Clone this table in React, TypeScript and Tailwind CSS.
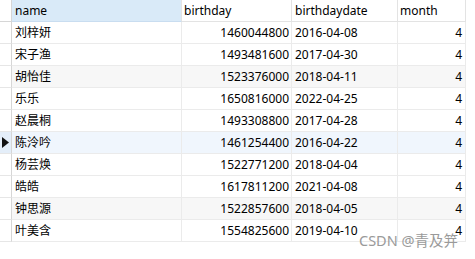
import React from "react";

const rows = [
  ["刘梓妍", "1460044800", "2016-04-08", "4"],
  ["宋子渔", "1493481600", "2017-04-30", "4"],
  ["胡怡佳", "1523376000", "2018-04-11", "4"],
  ["乐乐", "1650816000", "2022-04-25", "4"],
  ["赵晨桐", "1493308800", "2017-04-28", "4"],
  ["陈泠吟", "1461254400", "2016-04-22", "4"],
  ["杨芸焕", "1522771200", "2018-04-04", "4"],
  ["皓皓", "1617811200", "2021-04-08", "4"],
  ["钟思源", "1522857600", "2018-04-05", "4"],
  ["叶美含", "1554825600", "2019-04-10", "4"],
];

export default function App() {
  return (
    <div
      className="relative w-[475px] h-[259px] bg-white overflow-hidden text-[12px] text-black"
      style={{ fontFamily: '"Noto Sans", "Noto Sans CJK SC", sans-serif' }}
    >
      <div className="grid grid-cols-[12px_170px_110px_106px_68px] auto-rows-[22px]">
        <div className="border-r border-b border-[#d6d6d6] bg-white" />
        <div className="border-r border-b border-r-[#e3e3e3] border-b-[#c9ddf0] bg-[#d9eaf8] pl-[3px] flex items-center leading-none">name</div>
        <div className="border-r border-b border-[#e3e3e3] pl-[2px] flex items-center leading-none">birthday</div>
        <div className="border-r border-b border-[#e3e3e3] pl-[3px] flex items-center leading-none">birthdaydate</div>
        <div className="border-r border-b border-[#e3e3e3] pl-[2px] flex items-center leading-none">month</div>
        {rows.map((r, i) => {
          const selected = i === 5;
          const bg = selected ? "bg-[#f0f6fd]" : i % 3 === 2 ? "bg-[#f7f7f7]" : "bg-white";
          return (
            <React.Fragment key={i}>
              <div className={`border-r border-b border-r-[#d6d6d6] border-b-[#e6e6e6] flex items-center justify-center ${selected ? "bg-[#e4eef9]" : "bg-white"}`}>
                {selected && (
                  <svg width="7" height="11" viewBox="0 0 7 11">
                    <polygon points="0,0 7,5.5 0,11" fill="#111" />
                  </svg>
                )}
              </div>
              <div className={`border-r border-b border-[#ebebeb] pl-[3px] flex items-center leading-none ${bg}`}>{r[0]}</div>
              <div className={`border-r border-b border-[#ebebeb] pr-[2px] flex items-center justify-end leading-none ${bg}`}>{r[1]}</div>
              <div className={`border-r border-b border-[#ebebeb] pl-[3px] flex items-center leading-none ${bg}`}>{r[2]}</div>
              <div className={`border-r border-b border-[#ebebeb] pr-[3px] flex items-center justify-end leading-none ${bg}`}>{r[3]}</div>
            </React.Fragment>
          );
        })}
      </div>
      <div
        className="absolute left-[359px] top-[233px] text-[14.5px] leading-none text-[#9a9a9a] whitespace-nowrap"
        style={{ fontFamily: '"Noto Sans", "Noto Sans CJK SC", sans-serif' }}
      >
        CSDN @青及笄
      </div>
    </div>
  );
}
